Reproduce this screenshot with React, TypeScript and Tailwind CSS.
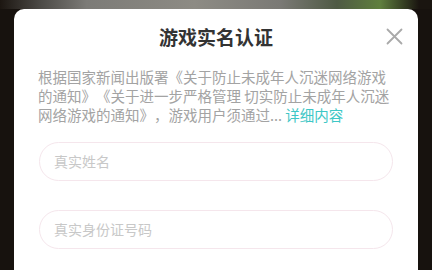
const cjk = { fontFamily: '"Noto Sans CJK SC", "Noto Sans", sans-serif' };

function Field({ placeholder }: { placeholder: string }) {
  return (
    <div className="h-[39px] rounded-full border border-[#f5e6ec] flex items-center pl-[14px]">
      <span className="text-[14px] text-[#c8c8c8]">{placeholder}</span>
    </div>
  );
}

export default function App() {
  return (
    <div className="w-[432px] h-[270px] overflow-hidden flex flex-col bg-[#17120e]" style={cjk}>
      {/* blurred game scene peeking above the dialog */}
      <div className="h-[9px] shrink-0 bg-[linear-gradient(to_right,#1c1611_0%,#4a4844_9%,#7c7b77_20%,#8d8b84_45%,#7a7975_65%,#4f5a44_78%,#5f7f3e_88%,#1a1510_97%)]" />

      <div className="flex-1 mx-[14px] bg-white rounded-t-[10px] relative px-[24px]">
        <h1 className="pt-[15px] text-center text-[19px] leading-[26px] font-bold text-[#333333]">
          游戏实名认证
        </h1>
        <button className="absolute right-[15px] top-[19px]">
          <svg width="17" height="17" viewBox="0 0 17 17" fill="none" stroke="#a9a9a9" strokeWidth="1.8" strokeLinecap="round">
            <path d="M1.5 1.5l14 14M15.5 1.5l-14 14" />
          </svg>
        </button>

        <p className="mt-[17px] text-[14.5px] leading-[19px] text-[#a3a3a3] [text-spacing-trim:space-all]">
          根据国家新闻出版署《关于防止未成年人沉迷网络游戏的通知》《关于进一步严格管理 切实防止未成年人沉迷网络游戏的通知》，游戏用户须通过...{' '}
          <span className="text-[#3ec7c6]">详细内容</span>
        </p>

        <div className="mt-[18px] mx-px flex flex-col gap-[29px]">
          <Field placeholder="真实姓名" />
          <Field placeholder="真实身份证号码" />
        </div>
      </div>
    </div>
  );
}
